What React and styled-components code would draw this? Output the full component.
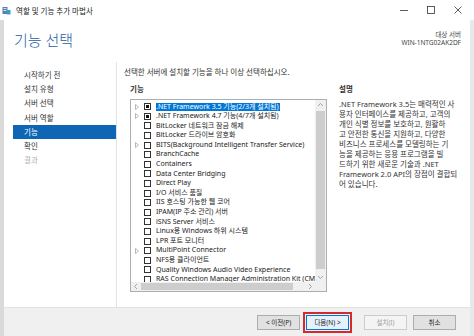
import React from "react";
import styled, { createGlobalStyle } from "styled-components";

const GlobalStyle = createGlobalStyle`
  html, body { margin: 0; padding: 0; width: 474px; height: 336px; overflow: hidden; background: #fff; }
  body { font-family: "Noto Sans", "Noto Sans CJK KR", sans-serif; color: #222; }
  #root { width: 474px; height: 336px; }
`;

const Window = styled.div`
  width: 474px;
  height: 336px;
  display: flex;
  flex-direction: column;
  background: #fff;
  overflow: hidden;
`;

const TitleBar = styled.div`
  height: 20px;
  flex: none;
  display: flex;
  align-items: center;
  padding-left: 2px;
  background: #fff;
`;

const TitleText = styled.span`
  font-size: 7.5px;
  color: #222;
  margin-left: 5px;
  white-space: nowrap;
`;

const Controls = styled.div`
  margin-left: auto;
  display: flex;
  padding-right: 3px;
`;

const Control = styled.div`
  width: 27px;
  height: 20px;
  display: flex;
  align-items: center;
  justify-content: center;
`;

const Frame = styled.div`
  flex: 1;
  display: flex;
  flex-direction: column;
  border-left: 4px solid #dadada;
  border-right: 4px solid #e8e8e8;
  min-height: 0;
`;

const Header = styled.div`
  height: 42px;
  flex: none;
  display: flex;
  justify-content: space-between;
  align-items: flex-start;
  padding: 0 9px 0 10px;
`;

const Heading = styled.h1`
  margin: 10px 0 0;
  font-size: 15px;
  line-height: 20px;
  font-weight: 300;
  color: #1f5c9e;
  white-space: nowrap;
`;

const ServerInfo = styled.div`
  margin-top: 11px;
  text-align: right;
  font-size: 6.5px;
  line-height: 8px;
  color: #444;
`;

const Main = styled.div`
  flex: 1;
  display: flex;
  min-height: 0;
`;

const Nav = styled.div`
  width: 103px;
  padding: 6px 0 0 9px;
  border-right: 1px solid #e3e3e3;
  display: flex;
  flex-direction: column;
`;

const NavItem = styled.div`
  height: 14.2px;
  line-height: 14.2px;
  padding-left: 11px;
  font-size: 7.5px;
  white-space: nowrap;
  color: ${(p) => (p.$active ? "#fff" : p.$disabled ? "#b4b4b4" : "#333")};
  background: ${(p) => (p.$active ? "#0f66b5" : "transparent")};
`;

const Content = styled.div`
  flex: 1;
  display: flex;
  flex-direction: column;
  padding: 5px 0 0 7px;
  min-width: 0;
`;

const Instruction = styled.div`
  font-size: 7.5px;
  line-height: 10px;
  color: #333;
  white-space: nowrap;
`;

const Columns = styled.div`
  display: flex;
  margin-top: 7px;
`;

const ListColumn = styled.div`
  width: 197px;
  margin-left: 6px;
  display: flex;
  flex-direction: column;
`;

const Label = styled.div`
  font-size: 7.5px;
  line-height: 10px;
  font-weight: 600;
  color: #333;
`;

const ListBox = styled.div`
  margin-top: 5px;
  height: 193px;
  box-sizing: border-box;
  border: 1px solid #abadb3;
  display: grid;
  grid-template-columns: 1fr 11px;
  grid-template-rows: 1fr 9px;
  background: #fff;
`;

const Rows = styled.div`
  grid-column: 1;
  grid-row: 1;
  overflow: hidden;
  padding-top: 2px;
  min-width: 0;
`;

const Row = styled.div`
  height: 9.6px;
  display: flex;
  align-items: center;
  padding-left: 1px;
  white-space: nowrap;
`;

const Expander = styled.div`
  width: 10px;
  height: 9.6px;
  flex: none;
  display: flex;
  align-items: center;
  justify-content: center;
`;

const Check = styled.div`
  width: 7px;
  height: 7px;
  box-sizing: border-box;
  border: 1px solid #333;
  background: #fff;
  margin-left: 2px;
  flex: none;
  display: flex;
  align-items: center;
  justify-content: center;
  &::after {
    content: "";
    display: ${(p) => (p.$ind ? "block" : "none")};
    width: 3px;
    height: 3px;
    background: #111;
  }
`;

const RowText = styled.span`
  margin-left: 5px;
  padding: 0 1px 0 0;
  font-size: 7px;
  line-height: 8.6px;
  color: ${(p) => (p.$sel ? "#fff" : "#1a1a1a")};
  background: ${(p) => (p.$sel ? "#0078d7" : "transparent")};
`;

const VScroll = styled.div`
  grid-column: 2;
  grid-row: 1;
  background: #f0f0f0;
  display: flex;
  flex-direction: column;
`;

const HScroll = styled.div`
  grid-column: 1;
  grid-row: 2;
  background: #f0f0f0;
  display: flex;
  align-items: stretch;
`;

const Corner = styled.div`
  grid-column: 2;
  grid-row: 2;
  background: #f0f0f0;
`;

const Arrow = styled.div`
  flex: none;
  width: ${(p) => (p.$h ? "10px" : "auto")};
  height: ${(p) => (p.$h ? "auto" : "10px")};
  display: flex;
  align-items: center;
  justify-content: center;
`;

const VThumb = styled.div`
  flex: 1;
  margin: 1px 1px 3px;
  background: #cdcdcd;
`;

const HThumb = styled.div`
  width: 152px;
  margin: 1px 0;
  background: #cdcdcd;
`;

const Spacer = styled.div`
  flex: 1;
`;

const DescColumn = styled.div`
  width: 131px;
  margin-left: 12px;
  display: flex;
  flex-direction: column;
`;

const DescText = styled.div`
  margin-top: 5px;
  font-size: 7.5px;
  line-height: 10px;
  color: #333;
  white-space: nowrap;
`;

const Footer = styled.div`
  height: 28px;
  flex: none;
  background: #f0f0f0;
  border-top: 1px solid #e2e2e2;
  display: flex;
  align-items: center;
  justify-content: flex-end;
  padding-right: 14px;
`;

const ButtonGroup = styled.div`
  display: flex;
  gap: 6px;
  margin-left: ${(p) => p.$ml || 0}px;
`;

const Button = styled.div`
  width: 43px;
  height: 15px;
  box-sizing: border-box;
  display: flex;
  align-items: center;
  justify-content: center;
  font-size: 6.5px;
  white-space: nowrap;
  border: 1px solid ${(p) => (p.$primary ? "#0078d7" : p.$disabled ? "#cccccc" : "#adadad")};
  background: ${(p) => (p.$primary ? "#e5f1fb" : p.$disabled ? "#f4f4f4" : "#e1e1e1")};
  color: ${(p) => (p.$disabled ? "#a0a0a0" : "#222")};
  outline: ${(p) => (p.$marked ? "2px solid #d42a2a" : "none")};
  outline-offset: 1px;
`;

const AppIcon = () => (
  <svg width="9" height="9" viewBox="0 0 9 9">
    <rect x="0.5" y="1" width="5" height="7" fill="#5a7fa8" />
    <rect x="1.5" y="2" width="3" height="1" fill="#cfe0f0" />
    <rect x="1.5" y="4" width="3" height="1" fill="#cfe0f0" />
    <rect x="5" y="4" width="3.5" height="4.5" fill="#3c9ad6" />
  </svg>
);

const Tri = () => (
  <svg width="4" height="6" viewBox="0 0 4 6">
    <path d="M0.5 0.5 L3.5 3 L0.5 5.5 Z" fill="none" stroke="#a6a6a6" strokeWidth="0.8" />
  </svg>
);

const Chevron = ({ dir }) => {
  const d = {
    up: "M1 4 L3.5 1.5 L6 4",
    down: "M1 2 L3.5 4.5 L6 2",
    left: "M4 1 L1.5 3.5 L4 6",
    right: "M2 1 L4.5 3.5 L2 6",
  }[dir];
  const vert = dir === "up" || dir === "down";
  return (
    <svg width={vert ? 7 : 6} height={vert ? 6 : 7} viewBox={vert ? "0 0 7 6" : "0 0 6 7"}>
      <path d={d} fill="none" stroke="#a3a3a3" strokeWidth="1" />
    </svg>
  );
};

const navItems = [
  { t: "시작하기 전" },
  { t: "설치 유형" },
  { t: "서버 선택" },
  { t: "서버 역할" },
  { t: "기능", active: true },
  { t: "확인" },
  { t: "결과", disabled: true },
];

const features = [
  { exp: true, ind: true, sel: true, t: ".NET Framework 3.5 기능(2/3개 설치됨)" },
  { exp: true, ind: true, t: ".NET Framework 4.7 기능(4/7개 설치됨)" },
  { t: "BitLocker 네트워크 잠금 해제" },
  { t: "BitLocker 드라이브 암호화" },
  { exp: true, t: "BITS(Background Intelligent Transfer Service)" },
  { t: "BranchCache" },
  { t: "Containers" },
  { t: "Data Center Bridging" },
  { t: "Direct Play" },
  { t: "I/O 서비스 품질" },
  { t: "IIS 호스팅 가능한 웹 코어" },
  { t: "IPAM(IP 주소 관리) 서버" },
  { t: "iSNS Server 서비스" },
  { t: "Linux용 Windows 하위 시스템" },
  { t: "LPR 포트 모니터" },
  { exp: true, t: "MultiPoint Connector" },
  { t: "NFS용 클라이언트" },
  { t: "Quality Windows Audio Video Experience" },
  { t: "RAS Connection Manager Administration Kit (CMAK)" },
];

const descLines = [
  ".NET Framework 3.5는 매력적인 사",
  "용자 인터페이스를 제공하고, 고객의",
  "개인 식별 정보를 보호하고, 원활하",
  "고 안전한 통신을 지원하고, 다양한",
  "비즈니스 프로세스를 모델링하는 기",
  "능을 제공하는 응용 프로그램을 빌",
  "드하기 위한 새로운 기술과 .NET",
  "Framework 2.0 API의 장점이 결합되",
  "어 있습니다.",
];

export default function App() {
  return (
    <Window>
      <GlobalStyle />
      <TitleBar>
        <AppIcon />
        <TitleText>역할 및 기능 추가 마법사</TitleText>
        <Controls>
          <Control>
            <svg width="8" height="8" viewBox="0 0 8 8">
              <path d="M0 4.5 H8" stroke="#333" strokeWidth="0.8" />
            </svg>
          </Control>
          <Control>
            <svg width="8" height="8" viewBox="0 0 8 8">
              <rect x="0.5" y="0.5" width="7" height="7" fill="none" stroke="#333" strokeWidth="0.8" />
            </svg>
          </Control>
          <Control>
            <svg width="8" height="8" viewBox="0 0 8 8">
              <path d="M0.5 0.5 L7.5 7.5 M7.5 0.5 L0.5 7.5" stroke="#333" strokeWidth="0.8" />
            </svg>
          </Control>
        </Controls>
      </TitleBar>
      <Frame>
        <Header>
          <Heading>기능 선택</Heading>
          <ServerInfo>
            <div>대상 서버</div>
            <div>WIN-1NTG02AK2DF</div>
          </ServerInfo>
        </Header>
        <Main>
          <Nav>
            {navItems.map((n) => (
              <NavItem key={n.t} $active={n.active} $disabled={n.disabled}>
                {n.t}
              </NavItem>
            ))}
          </Nav>
          <Content>
            <Instruction>선택한 서버에 설치할 기능을 하나 이상 선택하십시오.</Instruction>
            <Columns>
              <ListColumn>
                <Label>기능</Label>
                <ListBox>
                  <Rows>
                    {features.map((f) => (
                      <Row key={f.t}>
                        <Expander>{f.exp ? <Tri /> : null}</Expander>
                        <Check $ind={f.ind} />
                        <RowText $sel={f.sel}>{f.t}</RowText>
                      </Row>
                    ))}
                  </Rows>
                  <VScroll>
                    <Arrow>
                      <Chevron dir="up" />
                    </Arrow>
                    <VThumb />
                    <Arrow>
                      <Chevron dir="down" />
                    </Arrow>
                  </VScroll>
                  <HScroll>
                    <Arrow $h>
                      <Chevron dir="left" />
                    </Arrow>
                    <HThumb />
                    <Spacer />
                    <Arrow $h>
                      <Chevron dir="right" />
                    </Arrow>
                  </HScroll>
                  <Corner />
                </ListBox>
              </ListColumn>
              <DescColumn>
                <Label>설명</Label>
                <DescText>
                  {descLines.map((l) => (
                    <div key={l}>{l}</div>
                  ))}
                </DescText>
              </DescColumn>
            </Columns>
          </Content>
        </Main>
        <Footer>
          <ButtonGroup>
            <Button>&lt; 이전(P)</Button>
            <Button $primary $marked>
              다음(N) &gt;
            </Button>
          </ButtonGroup>
          <ButtonGroup $ml={15}>
            <Button $disabled>설치(I)</Button>
            <Button>취소</Button>
          </ButtonGroup>
        </Footer>
      </Frame>
    </Window>
  );
}
